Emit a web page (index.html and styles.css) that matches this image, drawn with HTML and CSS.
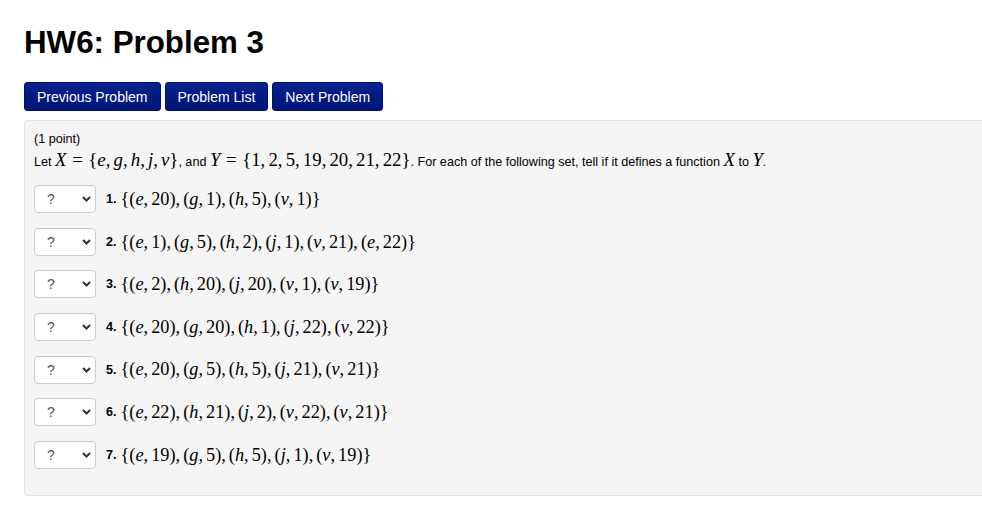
FILE: index.html
```html
<!DOCTYPE html>
<html>
<head>
<meta charset="utf-8">
<title>HW6: Problem 3</title>
<link rel="stylesheet" href="styles.css">
</head>
<body>
<div class="page">
  <h1 class="title">HW6: Problem 3</h1>
  <div class="nav">
    <button class="btn">Previous Problem</button>
    <button class="btn">Problem List</button>
    <button class="btn">Next Problem</button>
  </div>
  <div class="panel">
    <div class="pts">(1 point)</div>
    <div class="intro">Let <span class="m"><i>X</i><span class="eq">=</span>{<i>e</i><span class="c">,</span><i>g</i><span class="c">,</span><i>h</i><span class="c">,</span><i>j</i><span class="c">,</span><i>v</i>}</span>, and <span class="m"><i>Y</i><span class="eq">=</span>{1<span class="c">,</span>2<span class="c">,</span>5<span class="c">,</span>19<span class="c">,</span>20<span class="c">,</span>21<span class="c">,</span>22}</span>. For each of the following set, tell if it defines a function <span class="m"><i>X</i></span> to <span class="m"><i>Y</i></span>.</div>
    <div class="rows">
      <div class="row"><span class="sel"><select><option>?</option></select><svg class="chev" viewBox="0 0 9 6" width="9" height="6"><path d="M1 1 L4.5 4.5 L8 1" fill="none" stroke="#333" stroke-width="2"/></svg></span><b class="num">1.</b><span class="m">{(<i>e</i><span class="c">,</span>20)<span class="c">,</span>(<i>g</i><span class="c">,</span>1)<span class="c">,</span>(<i>h</i><span class="c">,</span>5)<span class="c">,</span>(<i>v</i><span class="c">,</span>1)}</span></div>
      <div class="row"><span class="sel"><select><option>?</option></select><svg class="chev" viewBox="0 0 9 6" width="9" height="6"><path d="M1 1 L4.5 4.5 L8 1" fill="none" stroke="#333" stroke-width="2"/></svg></span><b class="num">2.</b><span class="m">{(<i>e</i><span class="c">,</span>1)<span class="c">,</span>(<i>g</i><span class="c">,</span>5)<span class="c">,</span>(<i>h</i><span class="c">,</span>2)<span class="c">,</span>(<i>j</i><span class="c">,</span>1)<span class="c">,</span>(<i>v</i><span class="c">,</span>21)<span class="c">,</span>(<i>e</i><span class="c">,</span>22)}</span></div>
      <div class="row"><span class="sel"><select><option>?</option></select><svg class="chev" viewBox="0 0 9 6" width="9" height="6"><path d="M1 1 L4.5 4.5 L8 1" fill="none" stroke="#333" stroke-width="2"/></svg></span><b class="num">3.</b><span class="m">{(<i>e</i><span class="c">,</span>2)<span class="c">,</span>(<i>h</i><span class="c">,</span>20)<span class="c">,</span>(<i>j</i><span class="c">,</span>20)<span class="c">,</span>(<i>v</i><span class="c">,</span>1)<span class="c">,</span>(<i>v</i><span class="c">,</span>19)}</span></div>
      <div class="row"><span class="sel"><select><option>?</option></select><svg class="chev" viewBox="0 0 9 6" width="9" height="6"><path d="M1 1 L4.5 4.5 L8 1" fill="none" stroke="#333" stroke-width="2"/></svg></span><b class="num">4.</b><span class="m">{(<i>e</i><span class="c">,</span>20)<span class="c">,</span>(<i>g</i><span class="c">,</span>20)<span class="c">,</span>(<i>h</i><span class="c">,</span>1)<span class="c">,</span>(<i>j</i><span class="c">,</span>22)<span class="c">,</span>(<i>v</i><span class="c">,</span>22)}</span></div>
      <div class="row"><span class="sel"><select><option>?</option></select><svg class="chev" viewBox="0 0 9 6" width="9" height="6"><path d="M1 1 L4.5 4.5 L8 1" fill="none" stroke="#333" stroke-width="2"/></svg></span><b class="num">5.</b><span class="m">{(<i>e</i><span class="c">,</span>20)<span class="c">,</span>(<i>g</i><span class="c">,</span>5)<span class="c">,</span>(<i>h</i><span class="c">,</span>5)<span class="c">,</span>(<i>j</i><span class="c">,</span>21)<span class="c">,</span>(<i>v</i><span class="c">,</span>21)}</span></div>
      <div class="row"><span class="sel"><select><option>?</option></select><svg class="chev" viewBox="0 0 9 6" width="9" height="6"><path d="M1 1 L4.5 4.5 L8 1" fill="none" stroke="#333" stroke-width="2"/></svg></span><b class="num">6.</b><span class="m">{(<i>e</i><span class="c">,</span>22)<span class="c">,</span>(<i>h</i><span class="c">,</span>21)<span class="c">,</span>(<i>j</i><span class="c">,</span>2)<span class="c">,</span>(<i>v</i><span class="c">,</span>22)<span class="c">,</span>(<i>v</i><span class="c">,</span>21)}</span></div>
      <div class="row"><span class="sel"><select><option>?</option></select><svg class="chev" viewBox="0 0 9 6" width="9" height="6"><path d="M1 1 L4.5 4.5 L8 1" fill="none" stroke="#333" stroke-width="2"/></svg></span><b class="num">7.</b><span class="m">{(<i>e</i><span class="c">,</span>19)<span class="c">,</span>(<i>g</i><span class="c">,</span>5)<span class="c">,</span>(<i>h</i><span class="c">,</span>5)<span class="c">,</span>(<i>j</i><span class="c">,</span>1)<span class="c">,</span>(<i>v</i><span class="c">,</span>19)}</span></div>
    </div>
  </div>
</div>
</body>
</html>
```
FILE: styles.css
```css
html, body {
  margin: 0;
  padding: 0;
  background: #fff;
  overflow: hidden;
}
body {
  font-family: "Liberation Sans", Arial, sans-serif;
  color: #000;
}
.page {
  padding: 26px 0 0 24px;
}
.title {
  margin: 0;
  font-size: 31.3px;
  line-height: 34px;
  font-weight: bold;
}
.nav {
  display: flex;
  gap: 4px;
  margin-top: 22px;
}
.btn {
  font-family: "Liberation Sans", Arial, sans-serif;
  font-size: 14px;
  color: #fff;
  height: 29px;
  padding: 0 12px;
  border: 1px solid #00126e;
  border-radius: 3px;
  background: linear-gradient(to bottom, #06228e, #001576);
  cursor: pointer;
}
.panel {
  margin-top: 9px;
  width: 1000px;
  background: #f5f5f5;
  border: 1px solid #e3e3e3;
  border-radius: 3px;
  padding: 8px 0 26px 9px;
  font-size: 12.6px;
}
.pts, .intro {
  line-height: 21px;
}
.intro {
  margin-top: 1px;
}
.m {
  font-family: "Liberation Serif", "Times New Roman", serif;
  font-size: 18.3px;
  line-height: 1;
}
.intro .m {
  font-size: 18.8px;
}
.m i {
  font-style: italic;
}
.c {
  margin-right: 0.167em;
}
.eq {
  margin: 0 0.3em;
}
.rows {
  margin-top: 12px;
  display: flex;
  flex-direction: column;
  gap: 14.67px;
}
.row {
  display: flex;
  align-items: center;
  height: 28px;
  white-space: nowrap;
}
.sel {
  position: relative;
  display: inline-block;
  width: 62px;
  height: 28px;
  margin-right: 10px;
}
.sel select {
  appearance: none;
  -webkit-appearance: none;
  width: 62px;
  height: 28px;
  border: 1px solid #cccccc;
  border-radius: 4px;
  background: #fff;
  font-family: "Liberation Sans", Arial, sans-serif;
  font-size: 14px;
  color: #555;
  padding: 0 0 0 12px;
  margin: 0;
}
.chev {
  position: absolute;
  left: 48px;
  top: 11px;
}
.num {
  font-weight: bold;
  font-size: 12.6px;
  margin-right: 4px;
}
```
